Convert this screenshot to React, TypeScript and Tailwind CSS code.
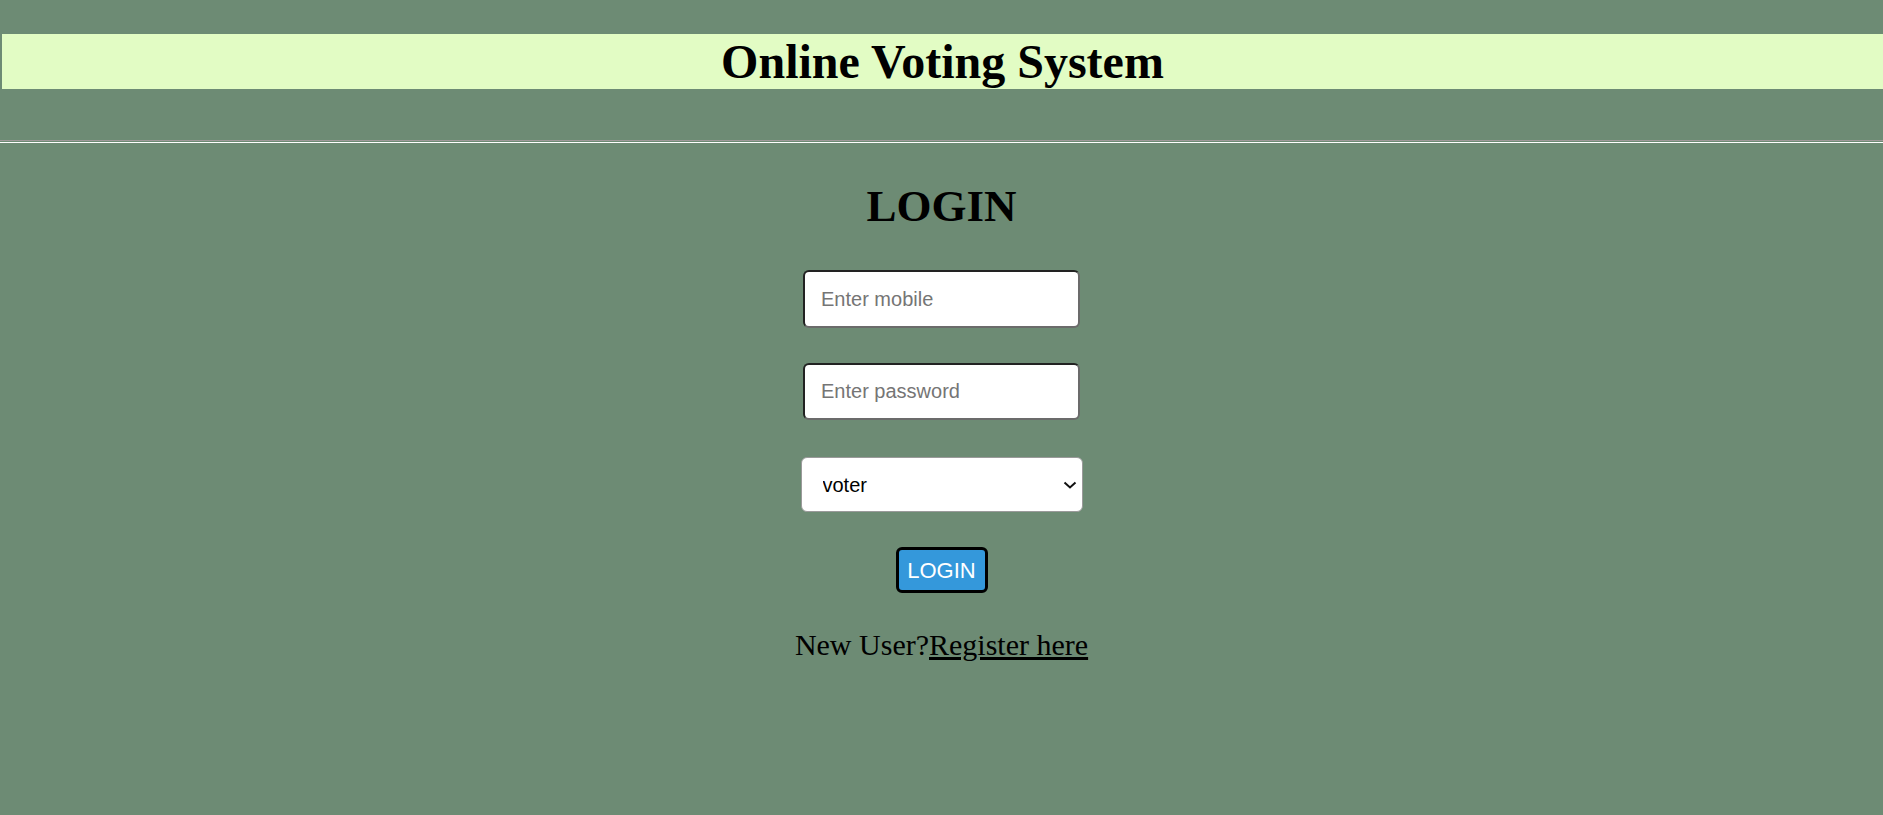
export default function App() {
  return (
    <div className="min-h-screen w-full bg-[#6d8b74] pt-[34px] font-['Liberation_Serif',_'Times_New_Roman',_serif] text-black">
      <h1 className="ml-[2px] bg-[#e2fcc4] text-center text-[48px] font-bold leading-[55px]">
        Online Voting System
      </h1>
      <div className="mt-[51px] h-[3px] border-t border-b border-t-[#a09a9a] border-b-white" />
      <div className="flex flex-col items-center">
        <h2 className="mt-[37px] text-[45px] font-bold leading-[52px]">LOGIN</h2>
        <input
          type="text"
          placeholder="Enter mobile"
          className="mt-[38px] h-[58px] w-[277px] rounded-[6px] border-2 border-t-[#222] border-l-[#222] border-r-[#6b6b6b] border-b-[#6b6b6b] bg-white pl-4 font-['Liberation_Sans',_Arial,_sans-serif] text-[20px] text-black placeholder:text-[#757575] outline-none"
        />
        <input
          type="password"
          placeholder="Enter password"
          className="mt-[35px] h-[57px] w-[277px] rounded-[6px] border-2 border-t-[#222] border-l-[#222] border-r-[#6b6b6b] border-b-[#6b6b6b] bg-white pl-4 font-['Liberation_Sans',_Arial,_sans-serif] text-[20px] text-black placeholder:text-[#757575] outline-none"
        />
        <div className="relative mt-[37px]">
          <select className="h-[55px] w-[282px] appearance-none rounded-[6px] border border-[#9a9a9a] bg-white pl-[21px] font-['Liberation_Sans',_Arial,_sans-serif] text-[20px] text-black outline-none">
            <option value="voter">voter</option>
            <option value="group">group</option>
          </select>
          <svg
            className="pointer-events-none absolute right-[6px] top-[24px] h-[8px] w-[14px]"
            viewBox="0 0 14 8"
            fill="none"
            stroke="#111"
            strokeWidth="2"
          >
            <path d="M1.5 1.5l5.5 5 5.5-5" />
          </svg>
        </div>
        <button className="mt-[35px] h-[46px] w-[92px] rounded-[6px] border-[3px] border-black bg-[#3498db] font-['Liberation_Sans',_Arial,_sans-serif] text-[22px] text-white">
          LOGIN
        </button>
        <p className="mt-[35px] text-[30px] leading-[34px]">
          New User?<a href="#" className="underline">Register here</a>
        </p>
      </div>
    </div>
  );
}
